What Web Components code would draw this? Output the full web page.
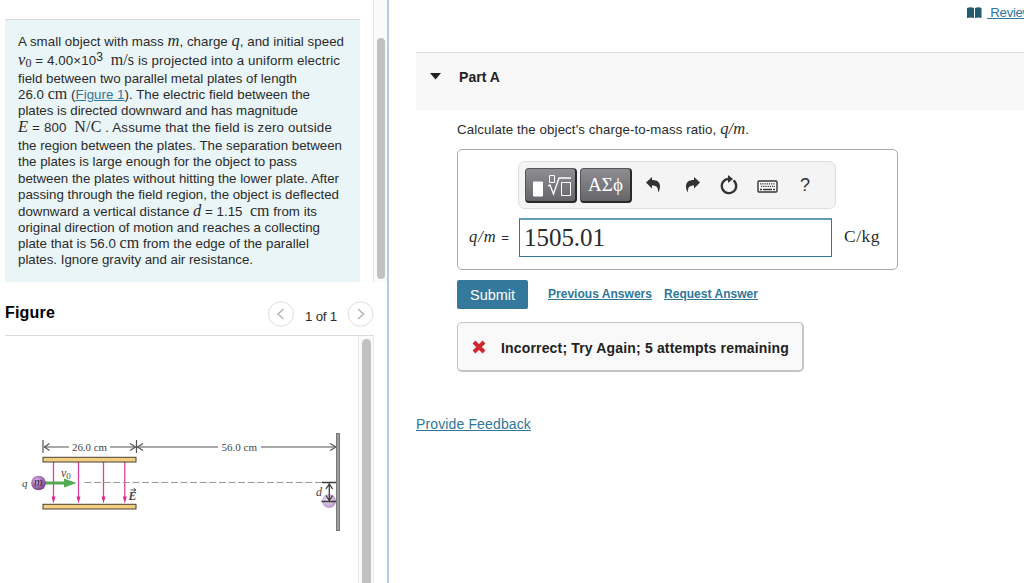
<!DOCTYPE html>
<html lang="en">
<head>
<meta charset="utf-8">
<title>Part A</title>
<style>
  body{
    margin: 0;
    height: 583px;
    overflow: hidden;
    background: white;
    color: #2b2b2b;
    font-family: "Liberation Sans", Arial, sans-serif;
    font-size: 13.3px;
  }
  a{ color: #2f7799; }
  i, .rm{
    font-family: "Liberation Serif", "Times New Roman", serif;
    font-size: 16.5px;
    line-height: 0;
  }
  .rm{ font-size: 16px; }
  .unit{ font-size: 17.5px; }
  sup, sub{ line-height: 0; font-size: 11px; }
  sub{ font-family: "Liberation Serif", serif; vertical-align: -2px; font-size: 12px; }
  sup{ vertical-align: 4px; font-size: 12px; }
</style>
</head>
<body>

<template id="item-page">
  <style>
    :host{ display: grid; grid-template-columns: 389px 1fr; height: 583px; }
    .left{ display: flex; flex-direction: column; height: 583px; min-width: 0; box-sizing: border-box; border-right: 2px solid #b9cbde; }
    .right{ min-width: 0; overflow: hidden; }
  </style>
  <div class="left"><slot name="left"></slot></div>
  <div class="right"><slot></slot></div>
</template>

<template id="problem-panel">
  <style>
    :host{ display: flex; height: 282px; flex: none; box-sizing: border-box; }
    .text{
      width: 355px;
      box-sizing: border-box;
      margin: 19px 13px 0 5px;
      padding: 14px 0 0 13px;
      background: #eaf5f7;
      border-top: 1px solid #d9dddd;
    }
    .track{ flex: 1; background: #fafafa; border-left: 1px solid #e6e6e6; padding: 38px 0 0 3px; }
    .thumb{ width: 8px; height: 241px; border-radius: 4px; background: #c1c1c1; }
  </style>
  <div class="text"><slot></slot></div>
  <div class="track"><div class="thumb"></div></div>
</template>

<template id="fit-text">
  <style>
    :host{ display: block; line-height: 16px; }
    span{ display: inline-block; vertical-align: top; white-space: pre; }
  </style>
  <span><slot></slot></span>
</template>

<template id="figure-panel">
  <style>
    :host{ display: flex; flex-direction: column; flex: 1; margin-left: 5px; width: 369px; }
    header{ display: flex; align-items: center; height: 54px; border-bottom: 1px solid #dcdcdc; box-sizing: border-box; padding-top: 12px; }
    h2{ margin: 0 auto 4px 0; font-size: 16px; color: #000; font-weight: bold; line-height: 20px; }
    .count{ margin: 4px 10px 0 10px; }
    .body{ flex: 1; display: flex; }
    .canvas{ width: 353px; }
    .track{ flex: 1; background: #fafafa; border: 1px solid #e9e9e9; border-width: 0 1px; padding: 3px 0 0 3px; display: flex; }
    .thumb{ width: 9px; border-radius: 5px 5px 0 0; background: #c1c1c1; }
    svg{ display: block; }
    header svg{ width: 27px; height: 26px; fill: none; margin-top: -1px; }
  </style>
  <header>
    <h2><fit-text w="50">Figure</fit-text></h2>
    <svg viewBox="0 0 27 26"><ellipse cx="13" cy="13" rx="12.5" ry="12.2" stroke="#dedede"/><path d="M15.500 8l-5.500 5 5.500 5" stroke="#b5b5b5" stroke-width="1.500"/></svg>
    <div class="count"><fit-text w="32">1 of 1</fit-text></div>
    <svg viewBox="0 0 27 26"><ellipse cx="13.500" cy="13" rx="12.500" ry="12.200" stroke="#dedede"/><path d="M11 8l5.500 5L11 18" stroke="#b5b5b5" stroke-width="1.500"/></svg>
  </header>
  <div class="body">
    <div class="canvas"><slot></slot></div>
    <div class="track"><div class="thumb"></div></div>
  </div>
</template>

<template id="plate-figure">
  <style>
    :host{ display: block; }
    svg{ display: block; font-family: "Liberation Serif", serif; font-size: 11px; fill: #444; }
    .v{ font-style: italic; }
  </style>
  <svg width="353" height="247" viewBox="5 336 353 247">
    <defs>
      <radialGradient id="ball" cx=".4" cy=".35" r=".65"><stop offset="0" stop-color="#dcb8e4"/><stop offset=".55" stop-color="#a873b9"/><stop offset="1" stop-color="#714585"/></radialGradient>
      <radialGradient id="ghost" cx=".4" cy=".4" r=".6"><stop offset="0" stop-color="#f1e7f5"/><stop offset="1" stop-color="#b99aca"/></radialGradient>
    </defs>
    <!-- dimension lines -->
    <g stroke="#555" fill="none" stroke-width="1.2">
      <path d="M43 440v13M136.500 440v13M44 447h25M110 447h26M137 447h81M261 447h75"/>
      <path d="M49.500 443.500L44.500 447l5 3.500M130 443.500l5.500 3.500-5.500 3.500M143 443.500l-5.500 3.500 5.500 3.500M330 443.500l6 3.500-6 3.500"/>
    </g>
    <text x="72" y="451" textLength="35" lengthAdjust="spacingAndGlyphs">26.0 cm</text>
    <text x="221.500" y="451" textLength="35.500" lengthAdjust="spacingAndGlyphs">56.0 cm</text>
    <!-- field -->
    <g stroke="#df3f9c" stroke-width="1.300"><path d="M53.500 462v36M78.500 462v36M103.500 462v36M124.800 462v36"/></g>
    <path fill="#d92b91" d="M51.500 496.500h4l-2 7zM76.500 496.500h4l-2 7zM101.500 496.500h4l-2 7zM122.800 496.500h4l-2 7z"/>
    <g fill="#f2ce82" stroke="#4a4030"><rect x="43" y="457.300" width="93" height="4.700"/><rect x="43" y="504.300" width="93" height="4.700"/></g>
    <path d="M84.500 482.500h238" stroke="#999" stroke-dasharray="7 2.600" fill="none"/>
    <path d="M45 481.500h19v-3l12.500 4.500-12.500 4.500v-3H45z" fill="#52aa52"/>
    <circle cx="38.500" cy="483" r="7.300" fill="url(#ball)"/>
    <text class="v" x="34" y="485.500" font-size="12" fill="#3c2749">m</text>
    <text class="v" x="22" y="487">q</text>
    <text class="v" x="61" y="477" font-size="12">v<tspan font-style="normal" font-size="9" dy="1.500">0</tspan></text>
    <text class="v" x="128.500" y="500" font-size="12" font-weight="bold">E</text>
    <path d="M130.500 490h5M133.500 488.200l2.500 1.800-2.500 1.800" stroke="#444" stroke-width=".9" fill="none"/>
    <!-- collecting plate -->
    <circle cx="329" cy="501" r="7" fill="url(#ghost)"/>
    <path d="M322 482.500h14M321.500 501.500h14.500M329.300 484v16.500M326 489l3.300-5 3.300 5M326 495.500l3.300 5 3.300-5" stroke="#3d3d3d" stroke-width="1.300" fill="none"/>
    <text class="v" x="316" y="496" font-size="12">d</text>
    <rect x="336.500" y="433.500" width="3" height="97" fill="#9b9da1" stroke="#77797c"/>
  </svg>
</template>

<template id="part-header">
  <style>
    :host{ display: flex; margin-left: 27px; height: 58px; box-sizing: border-box; border-top: 1px solid #ddd; background: #f8f8f8; padding: 16px 0 0 14px; gap: 18px; color: #222; }
    svg{ margin-top: 4px; }
    .title{ font-size: 14px; font-weight: bold; }
  </style>
  <svg width="11" height="7" viewBox="0 0 11 7"><path d="M0 0h11L5.500 6.500z" fill="#222"/></svg>
  <div class="title"><slot></slot></div>
</template>

<template id="answer-box">
  <style>
    :host{ display: block; width: 441px; height: 121px; box-sizing: border-box; border: 1px solid #aaa; border-radius: 5px; padding: 11px 0 0 60px; margin: 9px 0 0 68px; }
    .bar{ display: flex; align-items: center; width: 318px; height: 48px; box-sizing: border-box; border: 1px solid #dedede; border-radius: 7px; background: #f4f4f4; padding-left: 6px; }
    .key{ width: 52px; height: 35px; box-sizing: border-box; border: 1px solid #555; border-right: 2px solid #292929; border-bottom: 2px solid #292929; border-radius: 4px; background: linear-gradient(#8e8d92, #66666a); color: #fff; display: flex; align-items: center; justify-content: center; margin-right: 3px; font: 19px/30px "Liberation Serif", serif; }
    .bar svg{ display: block; flex: none; }
    .undo{ margin-left: 11px; }
    .redo{ margin-left: 24px; }
    .reset{ margin-left: 20px; }
    .keys{ margin: 3px 0 0 19px; }
    .help{ font-size: 18px; margin-left: 22px; color: #333; }
    .row{ display: flex; align-items: center; margin: 8px 0 0 -49px; height: 40px; }
    .label{ width: 50px; padding-top: 2px; }
    .field{ width: 313px; height: 39px; box-sizing: border-box; border: 1px solid #34769a; border-top: 2px solid #629bb7; padding: 10px 0 0 4px; font: 25px "Liberation Serif", serif; }
    .unit{ margin-left: 12px; padding-top: 2px; }
  </style>
  <div class="bar">
    <div class="key"><svg width="40" height="26" viewBox="0 0 40 26" fill="none" stroke="#fff"><path d="M2.500 10h9v14h-9z" fill="#fff"/><path d="M18.500 3.500h5v7h-5zM30.500 10.500h9v13h-9z"/><path d="M17 14l2-1 3.500 9L28 6h12" stroke-width="1.300"/></svg></div>
    <div class="key"><fit-text w="35">ΑΣϕ</fit-text></div>
    <svg class="undo" width="15" height="16" viewBox="0 0 15 16"><path fill="#333" d="M0 5.500L6 0v3c5 0 8 2 8 6.500 0 2.500-.8 4.500-2 6 .5-4.500-1-7-6-7v3z"/></svg>
    <svg class="redo" width="15" height="16" viewBox="0 0 15 16"><path fill="#333" d="M15 5.500L9 0v3c-5 0-8 2-8 6.500 0 2.500.800 4.500 2 6-.500-4.500 1-7 6-7v3z"/></svg>
    <svg class="reset" width="18" height="20" viewBox="0 0 18 20"><path d="M13.500 5.300A7.200 7.200 0 1 1 8 3.800" fill="none" stroke="#333" stroke-width="2.300"/><path d="M8 0l5 4-5 4z" fill="#333"/></svg>
    <svg class="keys" width="21" height="13" viewBox="0 0 21 13"><rect x="1" y="1" width="19" height="11" rx="1" fill="#fff" stroke="#333" stroke-width="1.400"/><path d="M3 3.800h15M4 6.300h14" stroke="#333" stroke-width="1.300" stroke-dasharray="1.300 .9"/><path d="M3 9.500h2M6 9.500h9M16 9.500h2" stroke="#333" stroke-width="1.400"/></svg>
    <span class="help">?</span>
  </div>
  <div class="row">
    <div class="label"><slot name="label"></slot></div>
    <div class="field"><fit-text w="81"><slot></slot></fit-text></div>
    <div class="unit"><slot name="unit"></slot></div>
  </div>
</template>

<template id="submit-row">
  <style>
    :host{ display: flex; margin: 10px 0 0 68px; height: 29px; color: #2f7799; }
    .submit{ width: 71px; background: #34789b; color: #fff; border-radius: 2px; padding: 7px 0 0 13px; box-sizing: border-box; font-size: 14.5px; margin-right: 20px; }
    .link{ font-size: 12px; font-weight: bold; text-decoration: underline; margin: 6px 12px 0 0; }
    .link a{ color: inherit; }
  </style>
  <div class="submit"><fit-text w="45">Submit</fit-text></div>
  <div class="link"><fit-text w="104"><a href="#">Previous Answers</a></fit-text></div>
  <div class="link"><fit-text w="94"><a href="#">Request Answer</a></fit-text></div>
</template>

<template id="result-note">
  <style>
    :host{ display: flex; align-items: center; width: 347px; height: 50px; box-sizing: border-box; margin: 13px 0 0 68px; padding: 2px 0 0 14px; border: 1px solid #c4c4c4; border-bottom-width: 2px; border-right-width: 2px; border-radius: 5px; background: #f9f9f9; gap: 15px; font-size: 14px; font-weight: bold; color: #222; }
    svg{ margin-top: -2px; }
  </style>
  <svg width="14" height="14" viewBox="0 0 14 14"><path d="M2 2l10 10M12 2L2 12" stroke="#cc2a30" stroke-width="4"/></svg>
  <slot></slot>
</template>

<template id="top-link">
  <style>
    :host{ display: flex; align-items: flex-start; gap: 5px; height: 52px; padding: 5px 0 0 578px; box-sizing: border-box; white-space: pre; letter-spacing: -.35px; }
    svg{ flex: none; margin-top: 2px; }
  </style>
  <svg width="15" height="12" viewBox="0 0 15 12"><path d="M0 1q3.500-1.500 7 0v10q-3.500-1-7 0zM8 1q3.500-1.500 6.500 0v10q-3-1-6.500 0z" fill="#235a70"/></svg>
  <slot></slot>
</template>

<item-page>
  <problem-panel slot="left">
    <fit-text w="326" h="19">A small object with mass <i>m</i>, charge <i>q</i>, and initial speed</fit-text>
    <fit-text w="322" h="17.5"><i>v</i><sub>0</sub> = 4.00×10<sup>3</sup>  <span class="rm">m/s</span> is projected into a uniform electric</fit-text>
    <fit-text w="279" h="16.5">field between two parallel metal plates of length</fit-text>
    <fit-text w="292" h="16.3">26.0 <span class="rm">cm</span> (<a href="#">Figure 1</a>). The electric field between the</fit-text>
    <fit-text w="280" h="17">plates is directed downward and has magnitude</fit-text>
    <fit-text w="314" h="17.5"><i>E</i> = 800  <span class="rm">N/C</span> . Assume that the field is zero outside</fit-text>
    <fit-text w="324" h="16.5">the region between the plates. The separation between</fit-text>
    <fit-text w="279" h="16.5">the plates is large enough for the object to pass</fit-text>
    <fit-text w="321" h="16.5">between the plates without hitting the lower plate. After</fit-text>
    <fit-text w="321" h="16.3">passing through the field region, the object is deflected</fit-text>
    <fit-text w="299" h="16">downward a vertical distance <i>d</i> = 1.15  <span class="rm">cm</span> from its</fit-text>
    <fit-text w="302" h="16.7">original direction of motion and reaches a collecting</fit-text>
    <fit-text w="291" h="16">plate that is 56.0 <span class="rm">cm</span> from the edge of the parallel</fit-text>
    <fit-text w="235" h="16">plates. Ignore gravity and air resistance.</fit-text>
  </problem-panel>
  <figure-panel slot="left"><plate-figure></plate-figure></figure-panel>

  <top-link><a href="#"> Review</a></top-link>
  <part-header><fit-text w="41">Part A</fit-text></part-header>
  <fit-text w="292" h="18" style="margin: 12px 0 0 68px">Calculate the object's charge-to-mass ratio, <i>q/m</i>.</fit-text>
  <answer-box>
    <fit-text slot="label" w="41"><i>q/m</i> =</fit-text>
    1505.01
    <fit-text slot="unit" w="36"><span class="rm unit">C/kg</span></fit-text>
  </answer-box>
  <submit-row></submit-row>
  <result-note><fit-text w="288">Incorrect; Try Again; 5 attempts remaining</fit-text></result-note>
  <fit-text w="115" style="margin: 44px 0 0 27px; font-size: 14px"><a href="#">Provide Feedback</a></fit-text>
</item-page>

<script>
  class BaseElement extends HTMLElement{
    constructor(){
      super()
      const elNode = document.querySelector('#' + this.localName)
        .content.cloneNode(true)
      this.attachShadow({mode:'open'}).appendChild( elNode )
    }
  }

  // spreads its text over `w` pixels; `h` is the line's height
  class FitText extends BaseElement{
    connectedCallback(){
      if(this.hasAttribute('h'))
        this.style.height = this.getAttribute('h') + 'px'
      requestAnimationFrame( () => this.fit() )
      this.fit()
    }
    fit(){
      const box = this.shadowRoot.querySelector('span')
      this.style.letterSpacing = '0px'
      const natural = box.getBoundingClientRect().width
      const slot = this.querySelector('slot')
      const text = slot
        ? slot.assignedNodes().map( n => n.textContent ).join('').trim()
        : this.textContent
      if(!natural || !text.length) return
      this.style.letterSpacing = (this.getAttribute('w') - natural) / text.length + 'px'
    }
  }

  class AnswerBox extends BaseElement{
    connectedCallback(){
      // keep the value free of the markup's line breaks
      this.childNodes.forEach( n => {
        if(n.nodeType === 3) n.data = n.data.trim()
      })
    }
  }

  customElements.define('answer-box', AnswerBox)
  ;['item-page', 'problem-panel', 'figure-panel', 'plate-figure', 'part-header',
    'submit-row', 'result-note', 'top-link'].forEach( name => {
    customElements.define(name, class extends BaseElement{})
  })
  customElements.define('fit-text', FitText)
</script>
</body>
</html>
